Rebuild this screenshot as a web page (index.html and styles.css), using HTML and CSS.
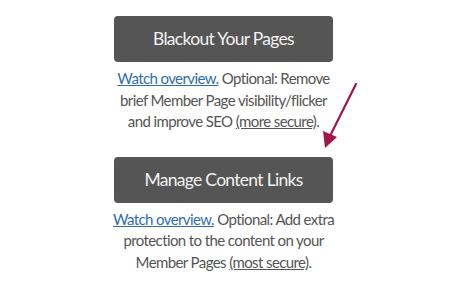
FILE: index.html
```html
<!DOCTYPE html>
<html lang="en">
<head>
  <meta charset="UTF-8">
  <meta name="viewport" content="width=device-width, initial-scale=1.0">
  <title>Content protection options</title>
  <link rel="stylesheet" href="styles.css">
</head>
<body>
  <div class="options">
    <div class="option">
      <a class="btn" href="#">Blackout Your Pages</a>
      <p><a class="watch" href="#">Watch overview.</a> Optional: Remove brief Member Page visibility/flicker and improve SEO <a class="note" href="#">(more secure)</a>.</p>
    </div>
    <div class="option">
      <a class="btn" href="#">Manage Content Links</a>
      <p><a class="watch" href="#">Watch overview.</a> Optional: Add extra protection to the content on your Member Pages <a class="note" href="#">(most secure)</a>.</p>
    </div>
    <svg class="arrow" width="50" height="80" viewBox="0 0 50 80">
      <line x1="41" y1="4" x2="14" y2="58" stroke="#a3164d" stroke-width="2.2" stroke-linecap="round"/>
      <polygon points="10,68 8,51 22,57" fill="#a3164d"/>
    </svg>
  </div>
</body>
</html>
```
FILE: styles.css
```css
body {
  font-family: Lato, 'Noto Sans', sans-serif;
  background: #fff;
  color: #555;
  margin: 0;
}
.options {
  position: relative;
  width: 219px;
  margin-left: 114px;
  padding-top: 16px;
}
.option {
  margin-bottom: 24px;
}
.btn {
  display: block;
  height: 46px;
  line-height: 46px;
  background: #555;
  color: #f2f2f2;
  border-radius: 4px;
  text-align: center;
  font-size: 17.5px;
  letter-spacing: -0.7px;
  text-decoration: none;
}
.option p {
  margin: 6px -3px 0;
  text-align: center;
  font-size: 15px;
  letter-spacing: -0.6px;
  line-height: 21.5px;
}
.watch {
  color: #2f6db0;
}
.note {
  color: #555;
}
.arrow {
  position: absolute;
  left: 201px;
  top: 80px;
}
```
